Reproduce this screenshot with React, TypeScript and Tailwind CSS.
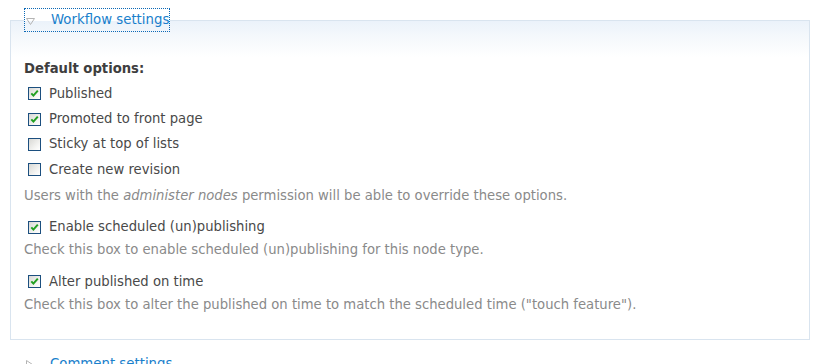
import React from "react"

type Opt = { label: string; checked: boolean }

const defaults: Opt[] = [
  { label: "Published", checked: true },
  { label: "Promoted to front page", checked: true },
  { label: "Sticky at top of lists", checked: false },
  { label: "Create new revision", checked: false },
]

function Checkbox({ checked }: { checked: boolean }) {
  return (
    <span className="flex h-[13px] w-[13px] shrink-0 items-center justify-center border border-[#1c4f7f] bg-[linear-gradient(135deg,#d8d8d4_0%,#f6f6f4_70%,#ffffff_100%)]">
      {checked && (
        <svg width="11" height="11" viewBox="0 0 11 11">
          <path d="M2.3 5.4 L4.4 7.6 L8.8 2.6" fill="none" stroke="#22a022" strokeWidth="2" />
        </svg>
      )}
    </span>
  )
}

function CheckRow({ label, checked, className = "" }: Opt & { className?: string }) {
  return (
    <label className={"flex h-[25.4px] items-center pl-[4px] text-[#494949] " + className}>
      <Checkbox checked={checked} />
      <span className="ml-[8px]">{label}</span>
    </label>
  )
}

export default function App() {
  return (
    <div className="min-h-[364px] bg-white pt-[8px] font-['DejaVu_Sans','Liberation_Sans',sans-serif] text-[13.2px] leading-[20px]">
      {/* Workflow settings (expanded) */}
      <fieldset className="ml-[10px] w-[800px] border border-[#d9e4ef] bg-[linear-gradient(to_bottom,#ebf2fa_0px,#f6f9fc_18px,#ffffff_36px)] px-[13px] pb-[24px] pt-[27px]">
        <legend className="p-0">
          <a href="#" className="flex h-[24px] w-[146px] items-center outline-1 outline-dotted outline-[#0b68b5] -outline-offset-1 text-[13.3px] text-[#1a7fcc] no-underline">
            <svg width="9" height="7" viewBox="0 0 9 7" className="ml-[2px] mt-[2px]">
              <path d="M0.5 0.5 H8.5 L4.5 6.5 Z" fill="none" stroke="#b4b4b4" strokeWidth="1" />
            </svg>
            <span className="ml-[16px] whitespace-nowrap">Workflow settings</span>
          </a>
        </legend>

        <div className="font-bold text-[#3e3e3e]">Default options:</div>
        <div className="mt-[2px]">
          {defaults.map((o) => (
            <CheckRow key={o.label} {...o} />
          ))}
        </div>
        <div className="pt-[1px] leading-[24px] text-[#8a8a8a]">
          Users with the <em>administer nodes</em> permission will be able to override these options.
        </div>

        <CheckRow label="Enable scheduled (un)publishing" checked className="mt-[7px]" />
        <div className="text-[#8a8a8a]">Check this box to enable scheduled (un)publishing for this node type.</div>

        <CheckRow label="Alter published on time" checked className="mt-[9px]" />
        <div className="pt-[1px] text-[#8a8a8a]">
          Check this box to alter the published on time to match the scheduled time ("touch feature").
        </div>
      </fieldset>

      {/* Comment settings (collapsed) */}
      <fieldset className="ml-[10px] mt-[12px] w-[800px] border-t border-[#d9e4ef] px-[13px]">
        <legend className="p-0">
          <a href="#" className="flex h-[24px] items-center pr-[2px] text-[13.3px] text-[#1a7fcc] no-underline">
            <svg width="7" height="9" viewBox="0 0 7 9" className="ml-[3px]">
              <path d="M0.5 0.5 V8.5 L6.5 4.5 Z" fill="none" stroke="#b4b4b4" strokeWidth="1" />
            </svg>
            <span className="ml-[17px] whitespace-nowrap">Comment settings</span>
          </a>
        </legend>
      </fieldset>
    </div>
  )
}
